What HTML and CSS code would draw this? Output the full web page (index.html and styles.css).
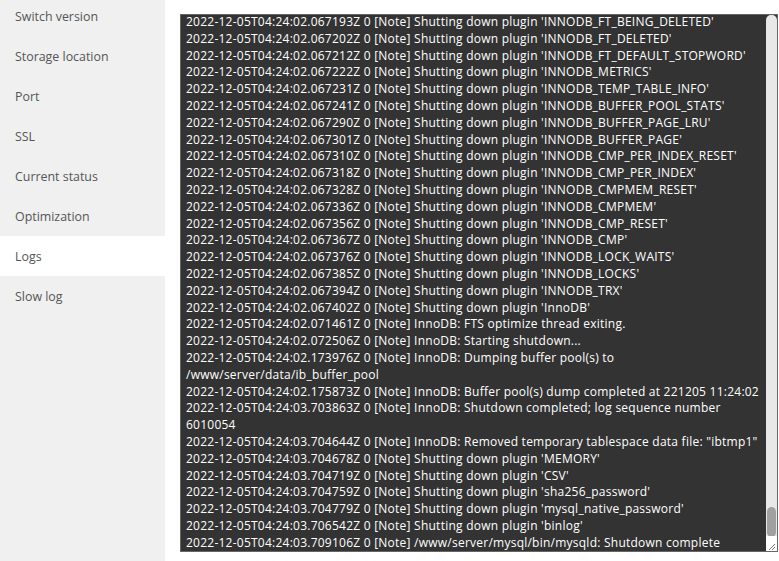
FILE: index.html
```html
<!DOCTYPE html>
<html lang="en">
<head>
    <meta charset="UTF-8">
    <title>MySQL - Logs</title>
    <link rel="stylesheet" href="styles.css">
</head>
<body>
    <div class="panel">
        <ul class="menu">
            <li>Switch version</li>
            <li>Storage location</li>
            <li>Port</li>
            <li>SSL</li>
            <li>Current status</li>
            <li>Optimization</li>
            <li class="active">Logs</li>
            <li>Slow log</li>
        </ul>
        <div class="content">
            <div class="log-box">
                <div class="log">2022-12-05T04:24:02.067193Z 0 [Note] Shutting down plugin 'INNODB_FT_BEING_DELETED'
2022-12-05T04:24:02.067202Z 0 [Note] Shutting down plugin 'INNODB_FT_DELETED'
2022-12-05T04:24:02.067212Z 0 [Note] Shutting down plugin 'INNODB_FT_DEFAULT_STOPWORD'
2022-12-05T04:24:02.067222Z 0 [Note] Shutting down plugin 'INNODB_METRICS'
2022-12-05T04:24:02.067231Z 0 [Note] Shutting down plugin 'INNODB_TEMP_TABLE_INFO'
2022-12-05T04:24:02.067241Z 0 [Note] Shutting down plugin 'INNODB_BUFFER_POOL_STATS'
2022-12-05T04:24:02.067290Z 0 [Note] Shutting down plugin 'INNODB_BUFFER_PAGE_LRU'
2022-12-05T04:24:02.067301Z 0 [Note] Shutting down plugin 'INNODB_BUFFER_PAGE'
2022-12-05T04:24:02.067310Z 0 [Note] Shutting down plugin 'INNODB_CMP_PER_INDEX_RESET'
2022-12-05T04:24:02.067318Z 0 [Note] Shutting down plugin 'INNODB_CMP_PER_INDEX'
2022-12-05T04:24:02.067328Z 0 [Note] Shutting down plugin 'INNODB_CMPMEM_RESET'
2022-12-05T04:24:02.067336Z 0 [Note] Shutting down plugin 'INNODB_CMPMEM'
2022-12-05T04:24:02.067356Z 0 [Note] Shutting down plugin 'INNODB_CMP_RESET'
2022-12-05T04:24:02.067367Z 0 [Note] Shutting down plugin 'INNODB_CMP'
2022-12-05T04:24:02.067376Z 0 [Note] Shutting down plugin 'INNODB_LOCK_WAITS'
2022-12-05T04:24:02.067385Z 0 [Note] Shutting down plugin 'INNODB_LOCKS'
2022-12-05T04:24:02.067394Z 0 [Note] Shutting down plugin 'INNODB_TRX'
2022-12-05T04:24:02.067402Z 0 [Note] Shutting down plugin 'InnoDB'
2022-12-05T04:24:02.071461Z 0 [Note] InnoDB: FTS optimize thread exiting.
2022-12-05T04:24:02.072506Z 0 [Note] InnoDB: Starting shutdown...
2022-12-05T04:24:02.173976Z 0 [Note] InnoDB: Dumping buffer pool(s) to
/www/server/data/ib_buffer_pool
2022-12-05T04:24:02.175873Z 0 [Note] InnoDB: Buffer pool(s) dump completed at 221205 11:24:02
2022-12-05T04:24:03.703863Z 0 [Note] InnoDB: Shutdown completed; log sequence number
6010054
2022-12-05T04:24:03.704644Z 0 [Note] InnoDB: Removed temporary tablespace data file: "ibtmp1"
2022-12-05T04:24:03.704678Z 0 [Note] Shutting down plugin 'MEMORY'
2022-12-05T04:24:03.704719Z 0 [Note] Shutting down plugin 'CSV'
2022-12-05T04:24:03.704759Z 0 [Note] Shutting down plugin 'sha256_password'
2022-12-05T04:24:03.704779Z 0 [Note] Shutting down plugin 'mysql_native_password'
2022-12-05T04:24:03.706542Z 0 [Note] Shutting down plugin 'binlog'
2022-12-05T04:24:03.709106Z 0 [Note] /www/server/mysql/bin/mysqld: Shutdown complete</div>
                <div class="scrollbar"><div class="thumb"></div></div>
                <div class="grip">
                    <svg width="11" height="15" viewBox="0 0 11 15">
                        <path d="M9 8 L3 14 M9 11 L6 14" stroke="#777" stroke-width="1"/>
                    </svg>
                </div>
            </div>
        </div>
    </div>
</body>
</html>
```

FILE: styles.css
```css
* {
    margin: 0;
    padding: 0;
    box-sizing: border-box;
}

body {
    background: #fff;
    font-family: "Open Sans", "Liberation Sans", sans-serif;
    overflow: hidden;
}

.panel {
    display: flex;
    height: 561px;
}

.menu {
    list-style: none;
    width: 165px;
    flex-shrink: 0;
    background: #f0f0f0;
    margin-top: -4px;
    height: 565px;
}

.menu li {
    height: 40px;
    padding: 2px 0 0 15px;
    line-height: 38px;
    font-size: 12.4px;
    color: #555;
}

.menu li.active {
    background: #fff;
}

.content {
    flex: 1;
    padding: 14px 1px 0 15px;
}

.log-box {
    position: relative;
    height: 538px;
    background: #333;
    border: 1px solid #666;
    overflow: hidden;
}

.log {
    margin-top: -1px;
    padding-left: 5px;
    color: #fff;
    font-size: 12px;
    letter-spacing: 0.24px;
    line-height: 16.8px;
    white-space: pre;
}

.scrollbar {
    position: absolute;
    top: 0;
    right: 0;
    width: 11px;
    height: 522px;
    background: #e8e8e8;
    border-radius: 5px 5px 0 0;
}

.scrollbar .thumb {
    position: absolute;
    left: 1px;
    right: 1px;
    bottom: 0;
    height: 30px;
    background: #a0a0a0;
    border-radius: 5px;
}

.grip {
    position: absolute;
    right: 0;
    bottom: 0;
    width: 11px;
    height: 15px;
    background: #fff;
}

.grip svg {
    display: block;
}
```
